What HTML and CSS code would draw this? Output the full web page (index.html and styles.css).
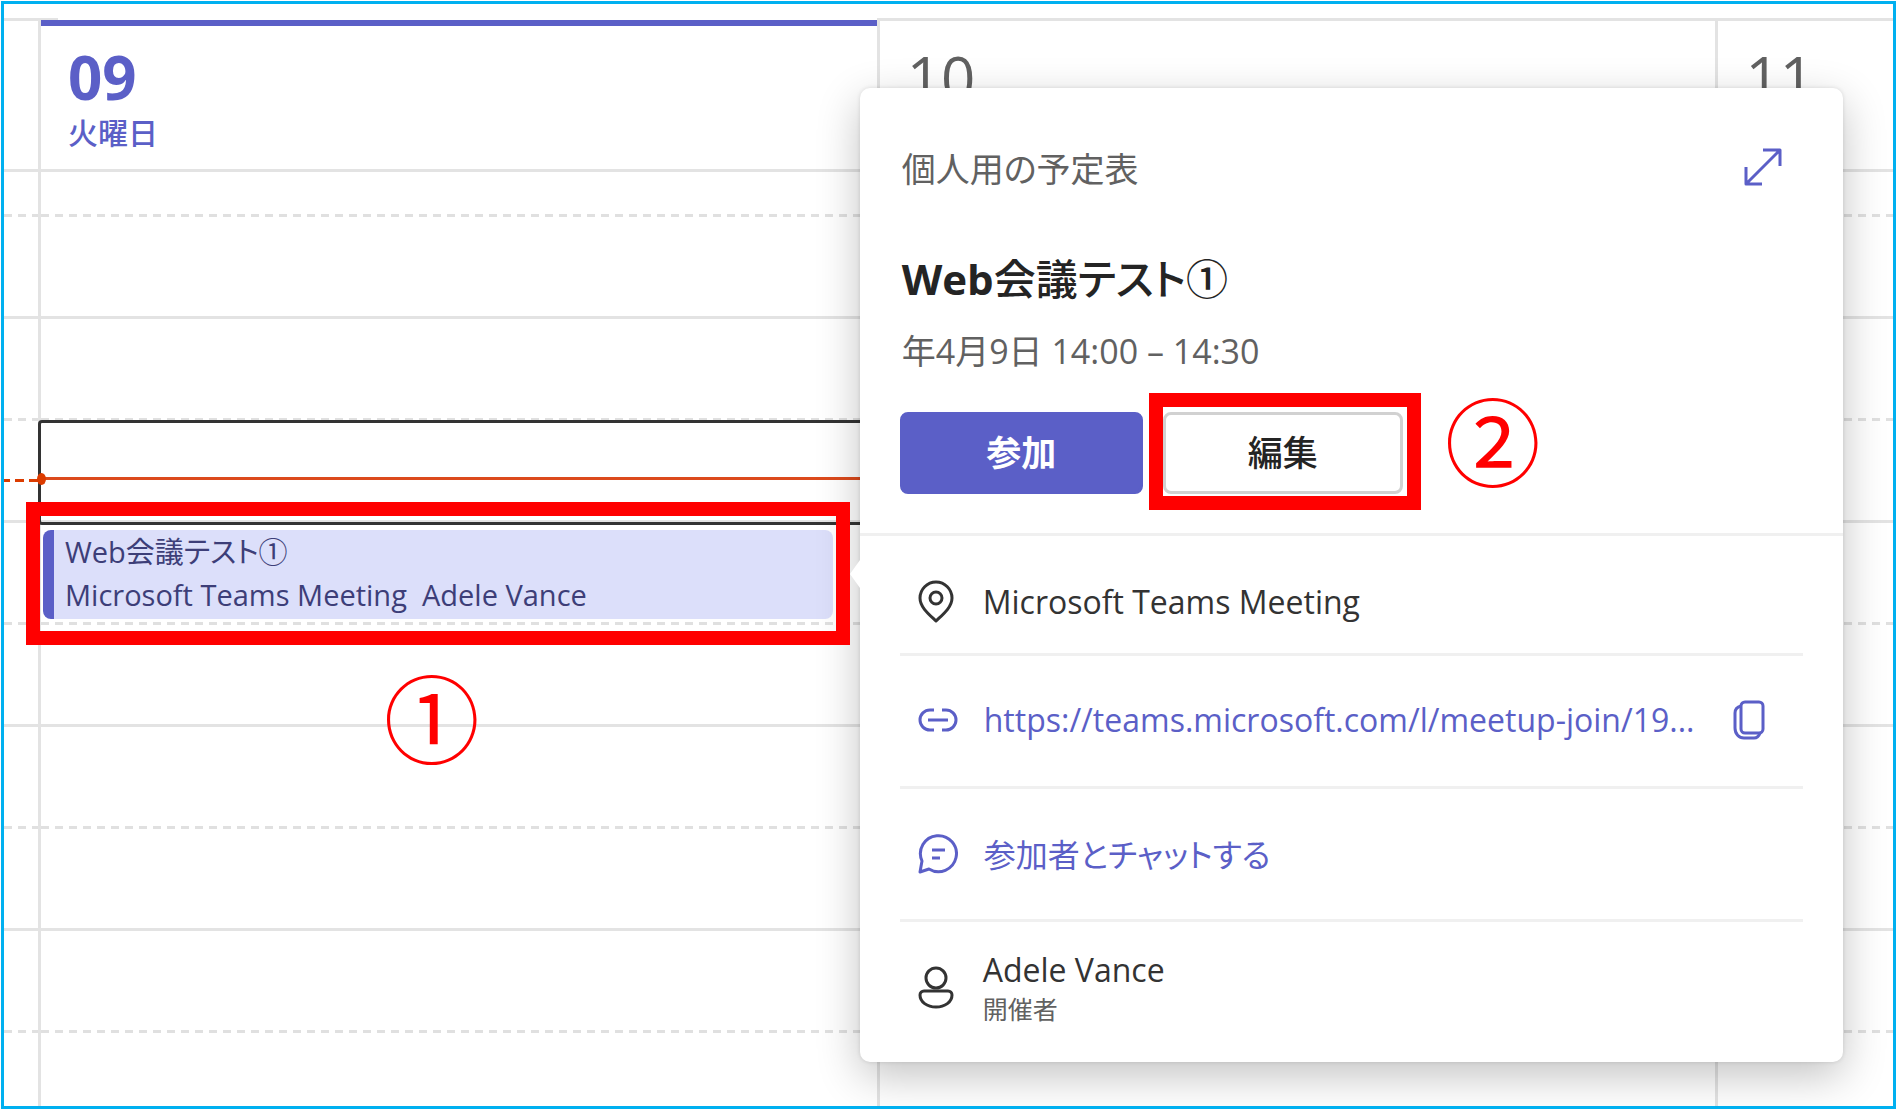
FILE: index.html
```
<!DOCTYPE html>
<html lang="ja">
<head>
    <meta charset="UTF-8">
    <meta name="viewport" content="width=device-width, initial-scale=1.0">
    <title>予定表</title>
    <link rel="stylesheet" href="styles.css">
</head>
<body>

    <main class="frame">
        <div class="calendar">
            <div class="gutter">
                <div class="day-head"></div>
                <div class="slot first"></div>
                <div class="slot half"></div>
                <div class="slot"></div>
                <div class="slot half"></div>
                <div class="slot"></div>
                <div class="slot half"></div>
                <div class="slot"></div>
                <div class="slot half"></div>
                <div class="slot"></div>
                <div class="slot half last"></div>
                <div class="now-dashes"></div>
            </div>

            <section class="day today">
                <div class="day-head">
                    <h2>09</h2>
                    <p>火曜日</p>
                </div>
                <div class="slot first"></div>
                <div class="slot half"></div>
                <div class="slot"></div>
                <div class="slot half"></div>
                <div class="slot"></div>
                <div class="slot half"></div>
                <div class="slot"></div>
                <div class="slot half"></div>
                <div class="slot"></div>
                <div class="slot half last"></div>

                <div class="selected-slot"></div>
                <div class="now-line"></div>

                <div class="event">
                    <p>Web会議テスト①</p>
                    <p>Microsoft Teams Meeting&nbsp; Adele Vance</p>
                </div>
            </section>

            <section class="day">
                <div class="day-head">
                    <h2>10</h2>
                </div>
                <div class="slot first"></div>
                <div class="slot half"></div>
                <div class="slot"></div>
                <div class="slot half"></div>
                <div class="slot"></div>
                <div class="slot half"></div>
                <div class="slot"></div>
                <div class="slot half"></div>
                <div class="slot"></div>
                <div class="slot half last"></div>
            </section>

            <section class="day">
                <div class="day-head">
                    <h2>11</h2>
                </div>
                <div class="slot first"></div>
                <div class="slot half"></div>
                <div class="slot"></div>
                <div class="slot half"></div>
                <div class="slot"></div>
                <div class="slot half"></div>
                <div class="slot"></div>
                <div class="slot half"></div>
                <div class="slot"></div>
                <div class="slot half last"></div>
            </section>
        </div>

        <article class="popover">
            <header class="summary">
                <div class="calendar-name">
                    <span>個人用の予定表</span>
                    <button class="icon-btn" aria-label="展開">
                        <svg width="40" height="40" viewBox="0 0 40 40">
                            <path d="M20 3h17v16M37 3L3 37M3 20v17h16" />
                        </svg>
                    </button>
                </div>
                <h1>Web<span>会議テスト①</span></h1>
                <p class="time">年4月9日 14:00 – 14:30</p>
                <div class="actions">
                    <button class="btn primary">参加</button>
                    <div class="edit">
                        <button class="btn">編集</button>
                        <span class="mark mark-edit"></span>
                        <span class="number number-two">②</span>
                    </div>
                </div>
            </header>

            <ul class="details">
                <li class="place">
                    <svg width="40" height="44" viewBox="0 0 40 44">
                        <path d="M18 41C13 36 2 28 2 18a16 16 0 0 1 32 0C34 28 23 36 18 41z" />
                        <circle cx="18" cy="18" r="6" />
                    </svg>
                    <span>Microsoft Teams Meeting</span>
                </li>
                <li class="link">
                    <svg width="40" height="44" viewBox="0 0 40 44">
                        <path d="M16 12h-4a10 10 0 0 0 0 20h4M24 12h4a10 10 0 0 1 0 20h-4M10 22h20" />
                    </svg>
                    <a href="#">https://teams.microsoft.com/l/meetup-join/19...</a>
                    <button class="icon-btn copy" aria-label="リンクをコピー">
                        <svg width="32" height="40" viewBox="0 0 32 40">
                            <rect x="8" y="2" width="22" height="31" rx="4" />
                            <path d="M8 6C4 7 2 9 2 13v15c0 6 4 10 9 10h10c3 0 5-2 6-5" />
                        </svg>
                    </button>
                </li>
                <li class="link">
                    <svg width="40" height="44" viewBox="0 0 40 44">
                        <path d="M2 41l2-11A18 18 0 1 1 11 38zM14 19h13M14 27h8" />
                    </svg>
                    <a href="#">参加者とチャットする</a>
                </li>
                <li>
                    <svg width="40" height="44" viewBox="0 0 40 44">
                        <circle cx="18" cy="12" r="10" />
                        <path d="M6 25h24a4 4 0 0 1 4 4C34 36 27 41 18 41S2 36 2 29a4 4 0 0 1 4-4z" />
                    </svg>
                    <div class="person">
                        <span>Adele Vance</span>
                        <small>開催者</small>
                    </div>
                </li>
            </ul>
        </article>

        <span class="mark mark-event"></span>
        <span class="number number-one">①</span>
    </main>

</body>
</html>
```
FILE: styles.css
```
* {
    box-sizing: border-box;
}

body {
    margin: 0;
    padding: 1px;
    background: #fff;
    color: #242424;
    font-family: "Open Sans", "Noto Sans CJK JP", sans-serif;
    font-feature-settings: "palt";
}

h1, h2, p, ul {
    margin: 0;
    padding: 0;
}

.frame {
    position: relative;
    display: flex;
    min-height: calc(100vh - 2px);
    padding-top: 14px;
    border: 3px solid #00b0f0;
    overflow: hidden;
}

/* calendar grid */
.calendar {
    flex: 1;
    display: grid;
    grid-template-columns: 34px repeat(3, 44.4%);
}

.gutter,
.day {
    position: relative;
    display: flex;
    flex-direction: column;
}

.day {
    border-left: 3px solid #e3e3e3;
}

.day-head {
    height: 151px;
    padding: 16px 27px 0;
    border-top: 3px solid #e3e3e3;
    color: #616161;
}

.day-head h2 {
    font-size: 60px;
    line-height: 80px;
    font-weight: 400;
}

.day-head p {
    font-size: 30px;
    line-height: 32px;
    font-weight: 500;
}

.today .day-head {
    height: 149px;
    margin-top: 2px;
    padding-top: 11px;
    border-top: 6px solid #5b5fc7;
    color: #5b5fc7;
}

.day.today h2 {
    font-weight: 700;
}

.slot {
    height: 102px;
    border-top: 3px solid #e3e3e3;
}

.slot.first {
    height: 45px;
}

.slot.half {
    border-top: none;
    background: repeating-linear-gradient(90deg, #e0e0e0 0 8px, transparent 8px 14px) top / 100% 3px no-repeat;
}

.slot.last {
    flex: 1;
    height: auto;
}

.selected-slot {
    position: absolute;
    top: 402px;
    left: -3px;
    right: 0;
    height: 105px;
    border: 3px solid #333;
    border-radius: 4px;
}

.now-line {
    position: absolute;
    top: 459px;
    left: 0;
    right: 0;
    height: 3px;
    background: #dc4a1c;
}

.now-line::before {
    content: "";
    position: absolute;
    top: -4px;
    left: -4px;
    width: 9px;
    height: 12px;
    border-radius: 50%;
    background: #dc3c00;
}

.now-dashes {
    position: absolute;
    top: 461px;
    left: 0;
    right: 0;
    height: 3px;
    background: repeating-linear-gradient(90deg, #dc3c00 0 6px, transparent 6px 11px, #dc3c00 11px 14px);
}

.event {
    position: absolute;
    top: 512px;
    left: 2px;
    right: 44px;
    height: 89px;
    padding: 0 11px;
    border-left: 11px solid #5b5fc7;
    border-radius: 8px;
    background: #dcdffa;
    color: #3d3e78;
    font-size: 29px;
    line-height: 43px;
    white-space: nowrap;
}

/* meeting card */
.popover {
    position: absolute;
    top: 84px;
    left: 45.3%;
    right: 2.65%;
    border-radius: 10px;
    background: #fff;
    box-shadow: 0 14px 44px rgba(0, 0, 0, 0.24), 0 0 4px rgba(0, 0, 0, 0.12);
    font-size: 32px;
}

.popover::before {
    content: "";
    position: absolute;
    top: 472px;
    left: -10px;
    border: 14px solid transparent;
    border-left: none;
    border-right: 10px solid #fff;
}

.summary {
    padding: 55px 40px 39px;
    border-bottom: 3px solid #f0f0f0;
}

.calendar-name {
    display: flex;
    justify-content: space-between;
    align-items: center;
    padding: 0 20px 0 2px;
    height: 48px;
    color: #616161;
    font-size: 34px;
}

h1 {
    margin: 60px 0 24px;
    padding-left: 2px;
    font-size: 42px;
    line-height: 56px;
}

h1 span {
    font-weight: 500;
}

.time {
    padding-left: 2px;
    font-size: 34px;
    line-height: 40px;
    color: #616161;
}

.actions {
    display: flex;
    gap: 20px;
    margin-top: 41px;
}

.edit {
    position: relative;
}

.btn {
    width: 240px;
    height: 82px;
    padding: 0 0 6px;
    border: 3px solid #d1d1d1;
    border-radius: 8px;
    background: #fff;
    color: #242424;
    font: 500 35px "Noto Sans CJK JP", sans-serif;
}

.btn.primary {
    width: 243px;
    border-color: #5b5fc7;
    background: #5b5fc7;
    color: #fff;
    font-weight: 700;
}

.icon-btn {
    padding: 0;
    border: none;
    background: none;
    color: #5b5fc7;
}

svg {
    display: block;
    flex: none;
    fill: none;
    stroke: currentColor;
    stroke-width: 3;
    stroke-linejoin: round;
}

.details {
    padding: 0 40px;
    list-style: none;
}

.details li {
    display: flex;
    align-items: center;
    gap: 25px;
    height: 133px;
    padding-left: 18px;
    border-bottom: 3px solid #f0f0f0;
    color: #333;
}

.details li:last-child {
    height: 140px;
    padding-bottom: 8px;
    border-bottom: none;
}

.details .place {
    height: 120px;
    padding-top: 14px;
}

.details .link {
    gap: 26px;
    padding-bottom: 3px;
    color: #5b5fc7;
}

.details a {
    color: #5b5fc7;
    text-decoration: none;
}

.copy {
    margin-left: auto;
    margin-right: 38px;
}

.person {
    display: flex;
    flex-direction: column;
    line-height: 42px;
}

.person small {
    font-size: 25px;
    line-height: 36px;
    color: #616161;
}

/* red callouts */
.mark {
    position: absolute;
    border: 14px solid #f00;
    pointer-events: none;
}

.mark-event {
    top: 498px;
    left: 22px;
    width: 43.6%;
    height: 143px;
}

.mark-edit {
    inset: -19px -18px -16px -14px;
}

.number {
    position: absolute;
    color: #f00;
    font: 96px/96px "Noto Sans CJK JP", sans-serif;
}

.number-one {
    top: 663px;
    left: 20.1%;
}

.number-two {
    top: -22px;
    left: 282px;
}
```
